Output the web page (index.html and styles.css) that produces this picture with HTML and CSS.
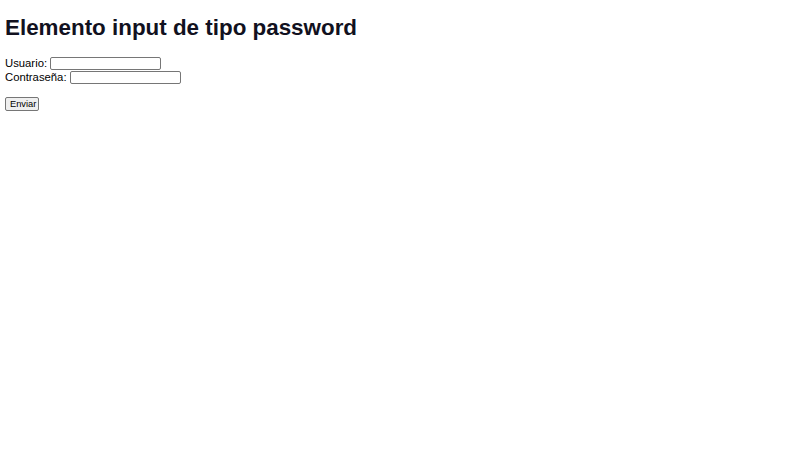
FILE: index.html
```html
<!DOCTYPE html>
<html lang="es">
<head>
<meta charset="utf-8">
<title>Elemento input de tipo password</title>
<link rel="stylesheet" href="styles.css">
</head>
<body>
<h1 class="title">Elemento input de tipo password</h1>
<form class="form">
  <div class="row"><label for="u">Usuario:</label> <input class="field" id="u" type="text"></div>
  <div class="row"><label for="p">Contraseña:</label> <input class="field" id="p" type="password"></div>
  <div class="actions"><button class="btn" type="submit">Enviar</button></div>
</form>
</body>
</html>
```
FILE: styles.css
```css
body {
  margin: 5px;
  font-family: "Liberation Sans", Arial, sans-serif;
  font-size: 11.3px;
  color: #000;
  background: #fff;
}
.title {
  font-size: 22.4px;
  font-weight: bold;
  color: #111120;
  margin: 10px 0 15px;
}
.row {
  line-height: 14px;
  height: 14px;
}
.field {
  box-sizing: border-box;
  width: 111px;
  height: 13px;
  margin: 1px 0 0;
  padding: 0 2px;
  border: 1px solid #767676;
  border-radius: 2px;
  font-size: 9px;
  vertical-align: top;
}
.actions {
  margin-top: 13px;
  line-height: 14px;
}
.btn {
  box-sizing: border-box;
  font-family: "Liberation Sans", Arial, sans-serif;
  font-size: 9.3px;
  width: 34px;
  height: 14px;
  padding: 0 4px;
  border: 1px solid #767676;
  border-radius: 2px;
  background: #efefef;
  color: #000;
  vertical-align: top;
}
```
